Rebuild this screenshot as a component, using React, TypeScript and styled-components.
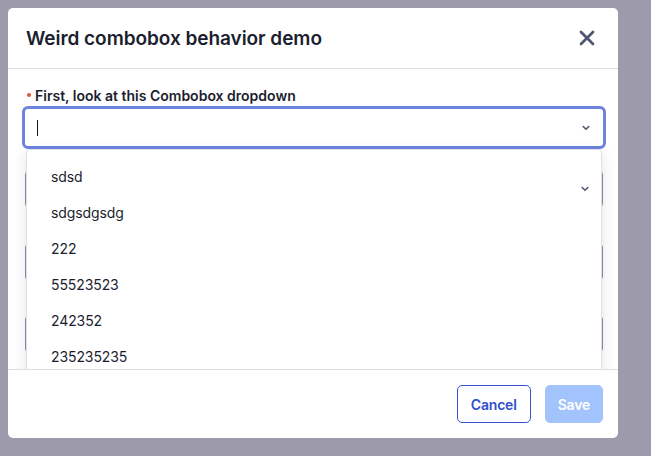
import React from 'react';
import styled, { createGlobalStyle } from 'styled-components';

const Global = createGlobalStyle`
  html, body {
    margin: 0;
    padding: 0;
    background: #9d9aac;
    font-family: Inter, 'Noto Sans', sans-serif;
  }
  * { box-sizing: border-box; }
`;

const Page = styled.div`
  width: 651px;
  height: 456px;
  padding: 8px 33px 0 8px;
`;

const Modal = styled.div`
  width: 610px;
  height: 430px;
  background: #ffffff;
  border-radius: 5px;
  display: flex;
  flex-direction: column;
  overflow: hidden;
`;

const Header = styled.div`
  height: 61px;
  flex: none;
  display: flex;
  align-items: center;
  justify-content: space-between;
  padding: 0 21px 0 18px;
  border-bottom: 1px solid #dcdde5;
`;

const Title = styled.h2`
  margin: 0;
  font-size: 19px;
  font-weight: 600;
  letter-spacing: -0.05px;
  color: #1b1e2e;
`;

const CloseBtn = styled.button`
  border: none;
  background: none;
  padding: 0;
  width: 20px;
  height: 20px;
  display: flex;
  align-items: center;
  justify-content: center;
  cursor: pointer;
`;

const Body = styled.div`
  position: relative;
  flex: 1;
  overflow: hidden;
  padding: 18px 15px 0 17px;
`;

const Field = styled.div<{ $gap: number }>`
  margin-bottom: ${(p) => p.$gap}px;
`;

const Label = styled.div`
  display: flex;
  align-items: center;
  gap: 4px;
  font-size: 14px;
  font-weight: 600;
  letter-spacing: 0;
  color: #1b1e2e;
  height: 16px;
  margin-bottom: 3px;
  padding-left: 2px;
`;

const Dot = styled.span`
  width: 4px;
  height: 4px;
  border-radius: 50%;
  background: #e0533f;
`;

const Control = styled.div<{ $focused?: boolean }>`
  position: relative;
  height: ${(p) => (p.$focused ? 43 : 40)}px;
  border-radius: 6px;
  border: ${(p) => (p.$focused ? '3px solid #6c83e0' : '1px solid #8a8ea8')};
  background: #ffffff;
  display: flex;
  align-items: center;
  padding: 0 12px;
  margin: ${(p) => (p.$focused ? '0 -3px 0 -3px' : '0')};
`;

const Caret = styled.span`
  width: 1px;
  height: 16px;
  background: #111111;
`;

const Chevron = styled.span<{ $top?: boolean }>`
  position: absolute;
  right: 13px;
  top: 50%;
  transform: translateY(-50%);
  display: flex;
  z-index: ${(p) => (p.$top ? 3 : 0)};
`;

const Listbox = styled.ul`
  position: absolute;
  z-index: 2;
  top: 80px;
  left: 18px;
  width: 576px;
  height: 300px;
  margin: 0;
  padding: 8px 0 0;
  list-style: none;
  background: #ffffff;
  border: 1px solid #dfe0e6;
  border-radius: 4px;
  box-shadow: 0 4px 14px rgba(30, 30, 50, 0.12);
`;

const Option = styled.li`
  height: 36px;
  display: flex;
  align-items: center;
  padding-left: 24px;
  font-size: 14px;
  letter-spacing: -0.1px;
  color: #1b1e2e;
`;

const Footer = styled.div`
  flex: none;
  height: 69px;
  border-top: 1px solid #dcdde5;
  display: flex;
  align-items: center;
  justify-content: flex-end;
  gap: 14px;
  padding: 0 15px 0 0;
`;

const Button = styled.button<{ $primary?: boolean }>`
  height: 38px;
  padding: 0 ${(p) => (p.$primary ? 12 : 13)}px;
  border-radius: 5px;
  font-family: Inter, 'Noto Sans', sans-serif;
  font-size: 14px;
  font-weight: 600;
  letter-spacing: -0.2px;
  cursor: pointer;
  border: 1px solid ${(p) => (p.$primary ? '#a2c3fb' : '#3555d0')};
  background: ${(p) => (p.$primary ? '#a2c3fb' : '#ffffff')};
  color: ${(p) => (p.$primary ? '#ffffff' : '#2f4fcc')};
`;

const ChevronIcon = () => (
  <svg width="8" height="6" viewBox="0 0 8 6">
    <path d="M1.2 1.5 L4 4.3 L6.8 1.5" fill="none" stroke="#555a72" strokeWidth="1.6" strokeLinecap="round" strokeLinejoin="round" />
  </svg>
);

const options = ['sdsd', 'sdgsdgsdg', '222', '55523523', '242352', '235235235'];

const App: React.FC = () => {
  return (
    <Page>
      <Global />
      <Modal>
        <Header>
          <Title>Weird combobox behavior demo</Title>
          <CloseBtn aria-label="Close">
            <svg width="16" height="16" viewBox="0 0 16 16">
              <path d="M2 2 L14 14 M14 2 L2 14" stroke="#505670" strokeWidth="2.8" strokeLinecap="round" />
            </svg>
          </CloseBtn>
        </Header>
        <Body>
          <Field $gap={20}>
            <Label>
              <Dot />
              First, look at this Combobox dropdown
            </Label>
            <Control $focused>
              <Caret />
              <Chevron>
                <ChevronIcon />
              </Chevron>
            </Control>
          </Field>
          <Field $gap={33}>
            <Control>
              <Chevron $top>
                <ChevronIcon />
              </Chevron>
            </Control>
          </Field>
          <Field $gap={32}>
            <Control>
              <Chevron>
                <ChevronIcon />
              </Chevron>
            </Control>
          </Field>
          <Field $gap={0}>
            <Control>
              <Chevron>
                <ChevronIcon />
              </Chevron>
            </Control>
          </Field>
          <Listbox role="listbox">
            {options.map((o) => (
              <Option key={o}>{o}</Option>
            ))}
          </Listbox>
        </Body>
        <Footer>
          <Button>Cancel</Button>
          <Button $primary>Save</Button>
        </Footer>
      </Modal>
    </Page>
  );
};

export default App;
